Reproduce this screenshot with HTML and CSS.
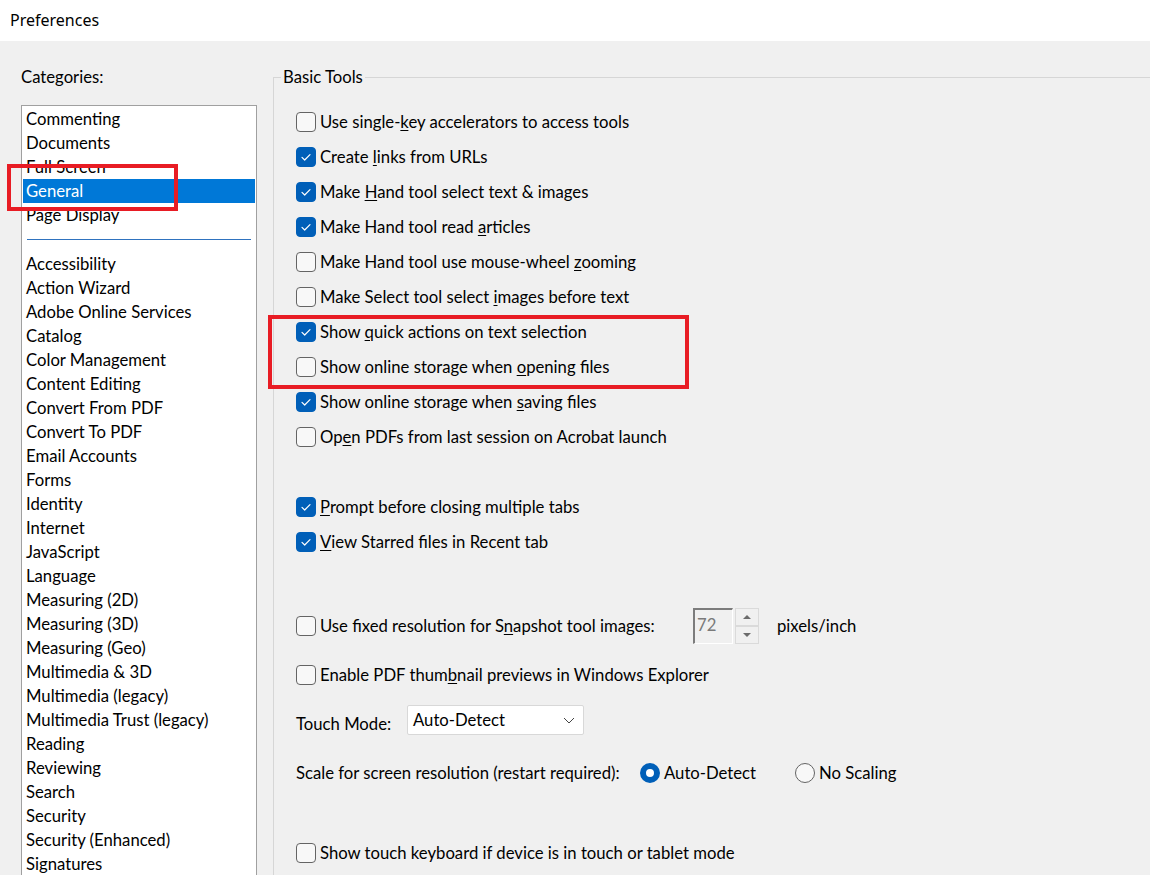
FILE: index.html
```html
<!DOCTYPE html>
<html>
<head>
<meta charset="utf-8">
<title>Preferences</title>
<link rel="stylesheet" href="styles.css">
</head>
<body>
<div class="titlebar">Preferences</div>
<div class="main">
  <aside class="cats">
    <div class="cats-label">Categories:</div>
    <div class="listbox">
      <div class="item">Commenting</div>
      <div class="item">Documents</div>
      <div class="item">Full Screen</div>
      <div class="item sel">General</div>
      <div class="item">Page Display</div>
      <div class="sep"></div>
      <div class="item">Accessibility</div>
      <div class="item">Action Wizard</div>
      <div class="item">Adobe Online Services</div>
      <div class="item">Catalog</div>
      <div class="item">Color Management</div>
      <div class="item">Content Editing</div>
      <div class="item">Convert From PDF</div>
      <div class="item">Convert To PDF</div>
      <div class="item">Email Accounts</div>
      <div class="item">Forms</div>
      <div class="item">Identity</div>
      <div class="item">Internet</div>
      <div class="item">JavaScript</div>
      <div class="item">Language</div>
      <div class="item">Measuring (2D)</div>
      <div class="item">Measuring (3D)</div>
      <div class="item">Measuring (Geo)</div>
      <div class="item">Multimedia &amp; 3D</div>
      <div class="item">Multimedia (legacy)</div>
      <div class="item">Multimedia Trust (legacy)</div>
      <div class="item">Reading</div>
      <div class="item">Reviewing</div>
      <div class="item">Search</div>
      <div class="item">Security</div>
      <div class="item">Security (Enhanced)</div>
      <div class="item">Signatures</div>
    </div>
  </aside>

  <fieldset class="group">
    <legend>Basic Tools</legend>
    <div class="rows">
      <div class="opt"><span class="cb"></span><span>Use single-<u>k</u>ey accelerators to access tools</span></div>
      <div class="opt"><span class="cb on"><svg viewBox="0 0 20 20"><path d="M6 10.3 L8.7 13 L14 7.6"/></svg></span><span>Create <u>l</u>inks from URLs</span></div>
      <div class="opt"><span class="cb on"><svg viewBox="0 0 20 20"><path d="M6 10.3 L8.7 13 L14 7.6"/></svg></span><span>Make <u>H</u>and tool select text &amp; images</span></div>
      <div class="opt"><span class="cb on"><svg viewBox="0 0 20 20"><path d="M6 10.3 L8.7 13 L14 7.6"/></svg></span><span>Make Hand tool read <u>a</u>rticles</span></div>
      <div class="opt"><span class="cb"></span><span>Make Hand tool use mouse-wheel <u>z</u>ooming</span></div>
      <div class="opt"><span class="cb"></span><span>Make Select tool select <u>i</u>mages before text</span></div>
      <div class="opt"><span class="cb on"><svg viewBox="0 0 20 20"><path d="M6 10.3 L8.7 13 L14 7.6"/></svg></span><span>Show <u>q</u>uick actions on text selection</span></div>
      <div class="opt"><span class="cb"></span><span>Show online storage when <u>o</u>pening files</span></div>
      <div class="opt"><span class="cb on"><svg viewBox="0 0 20 20"><path d="M6 10.3 L8.7 13 L14 7.6"/></svg></span><span>Show online storage when <u>s</u>aving files</span></div>
      <div class="opt"><span class="cb"></span><span>Op<u>e</u>n PDFs from last session on Acrobat launch</span></div>

      <div class="opt gap-a"><span class="cb on"><svg viewBox="0 0 20 20"><path d="M6 10.3 L8.7 13 L14 7.6"/></svg></span><span><u>P</u>rompt before closing multiple tabs</span></div>
      <div class="opt"><span class="cb on"><svg viewBox="0 0 20 20"><path d="M6 10.3 L8.7 13 L14 7.6"/></svg></span><span><u>V</u>iew Starred files in Recent tab</span></div>

      <div class="opt gap-b">
        <div class="lbl-snap"><span class="cb"></span><span>Use fixed resolution for S<u>n</u>apshot tool images:</span></div>
        <div class="spin-input">72</div>
        <div class="spin-btns">
          <span class="spin-btn"><svg viewBox="0 0 10 6"><path d="M1 5 L5 1 L9 5 Z"/></svg></span>
          <span class="spin-btn"><svg viewBox="0 0 10 6"><path d="M1 1 L5 5 L9 1 Z"/></svg></span>
        </div>
        <span class="unit">pixels/inch</span>
      </div>
      <div class="opt gap-c"><span class="cb"></span><span>Enable PDF thum<u>b</u>nail previews in Windows Explorer</span></div>

      <div class="opt gap-d">
        <span class="lbl-touch">Touch Mode:</span>
        <div class="select"><span>Auto-Detect</span><svg viewBox="0 0 12 7"><path d="M1 1 L6 6 L11 1"/></svg></div>
      </div>

      <div class="opt gap-e">
        <span class="lbl-scale">Scale for screen resolution (restart required):</span>
        <span class="radio-opt first"><span class="rb on"></span><span>Auto-Detect</span></span>
        <span class="radio-opt"><span class="rb"></span><span>No Scaling</span></span>
      </div>

      <div class="opt gap-f"><span class="cb"></span><span>Show touch keyboard if device is in touch or tablet mode</span></div>
    </div>
  </fieldset>
</div>

<div class="mark mark-general"></div>
<div class="mark mark-storage"></div>
</body>
</html>
```

FILE: styles.css
```css
* { box-sizing: border-box; }

html, body {
  margin: 0;
  padding: 0;
}

body {
  position: relative;
  width: 1150px;
  height: 875px;
  overflow: hidden;
  background: #f0f0f0;
  color: #000;
  font-family: Lato, "Noto Sans", sans-serif;
  font-size: 16.7px;
}

u {
  text-decoration-thickness: 1px;
  text-underline-offset: 2px;
}

.titlebar {
  height: 41px;
  background: #fff;
  padding-left: 10px;
  line-height: 40px;
  font-family: "Noto Sans", sans-serif;
  font-size: 16px;
}

.main {
  display: flex;
  align-items: flex-start;
}

/* Categories column */
.cats {
  flex: none;
  width: 257px;
  padding-left: 21px;
}

.cats-label {
  margin-top: 24px;
  height: 24px;
  line-height: 24px;
}

.listbox {
  margin-top: 16px;
  height: 800px;
  background: #fff;
  border: 1px solid #a0a0a0;
  border-bottom: none;
  padding: 1px 1px 0;
}

.item {
  height: 24px;
  line-height: 24px;
  padding-left: 3px;
  white-space: nowrap;
}

.item.sel {
  background: #0078d7;
  color: #fff;
}

.sep {
  height: 1px;
  background: #2f73bf;
  margin: 12px 4px 12px;
}

/* Basic tools group */
.group {
  flex: 1;
  min-width: 0;
  margin: 26px 0 0 16px;
  padding: 0;
  height: 900px;
  border: 1px solid #d6d6d6;
  border-right: none;
  border-bottom: none;
}

.group legend {
  margin-left: 7px;
  padding: 0 2px;
  line-height: 20px;
}

.rows {
  padding: 17px 0 0 22px;
}

.opt {
  display: flex;
  align-items: center;
  height: 35px;
  gap: 4px;
  white-space: nowrap;
}

.gap-a { margin-top: 35px; }
.gap-b { margin-top: 49px; }
.gap-c { margin-top: 14px; }
.gap-d { margin-top: 12px; }
.gap-e { margin-top: 16px; }
.gap-f { margin-top: 45px; }

.cb {
  flex: none;
  width: 20px;
  height: 20px;
  border: 1px solid #646464;
  border-radius: 4px;
  background: #f8f8f8;
  display: flex;
  align-items: center;
  justify-content: center;
}

.cb.on {
  background: #005fb8;
  border-color: #005fb8;
}

.cb svg {
  width: 20px;
  height: 20px;
  flex: none;
}

.cb path {
  fill: none;
  stroke: #fff;
  stroke-width: 1.2;
  stroke-linecap: round;
  stroke-linejoin: round;
}

/* Snapshot row */
.lbl-snap {
  flex: none;
  width: 393px;
  display: flex;
  align-items: center;
  gap: 4px;
}

.spin-input {
  flex: none;
  width: 40px;
  height: 36px;
  border-top: 2px solid #7c7c7c;
  border-left: 2px solid #7c7c7c;
  border-right: 1px solid #fff;
  border-bottom: 1px solid #fff;
  color: #7a7a7a;
  padding: 4px 0 0 2px;
  line-height: 22px;
}

.spin-btns {
  flex: none;
  margin-left: -2px;
  width: 24px;
  height: 36px;
  display: flex;
  flex-direction: column;
}

.spin-btn {
  flex: 1;
  border: 1px solid #dadada;
  display: flex;
  align-items: center;
  justify-content: center;
}

.spin-btn svg {
  width: 10px;
  height: 6px;
}

.spin-btn path {
  fill: #6b6b6b;
}

.unit {
  margin-left: 14px;
}

/* Touch mode */
.lbl-touch {
  flex: none;
  width: 107px;
  padding-top: 4px;
}

.select {
  flex: none;
  width: 177px;
  height: 30px;
  margin-top: -3px;
  background: #fff;
  border: 1px solid #d8d8d8;
  border-radius: 2px;
  padding: 0 8px 0 5px;
  display: flex;
  align-items: center;
  justify-content: space-between;
}

.select svg {
  width: 12px;
  height: 7px;
}

.select path {
  fill: none;
  stroke: #444;
  stroke-width: 1;
}

/* Scale radios */
.lbl-scale {
  flex: none;
  width: 340px;
}

.radio-opt {
  display: flex;
  align-items: center;
  gap: 4px;
}

.radio-opt.first {
  width: 151px;
}

.rb {
  flex: none;
  width: 20px;
  height: 20px;
  border-radius: 50%;
  border: 1px solid #646464;
  background: #f8f8f8;
}

.rb.on {
  border: 6px solid #005fb8;
  background: #fff;
}

/* Red annotation boxes over the dialog */
.mark {
  position: absolute;
  border: 4px solid #e81c24;
  pointer-events: none;
}

.mark-general {
  left: 7px;
  top: 164px;
  width: 171px;
  height: 47px;
}

.mark-storage {
  left: 268px;
  top: 315px;
  width: 421px;
  height: 74px;
}
```
